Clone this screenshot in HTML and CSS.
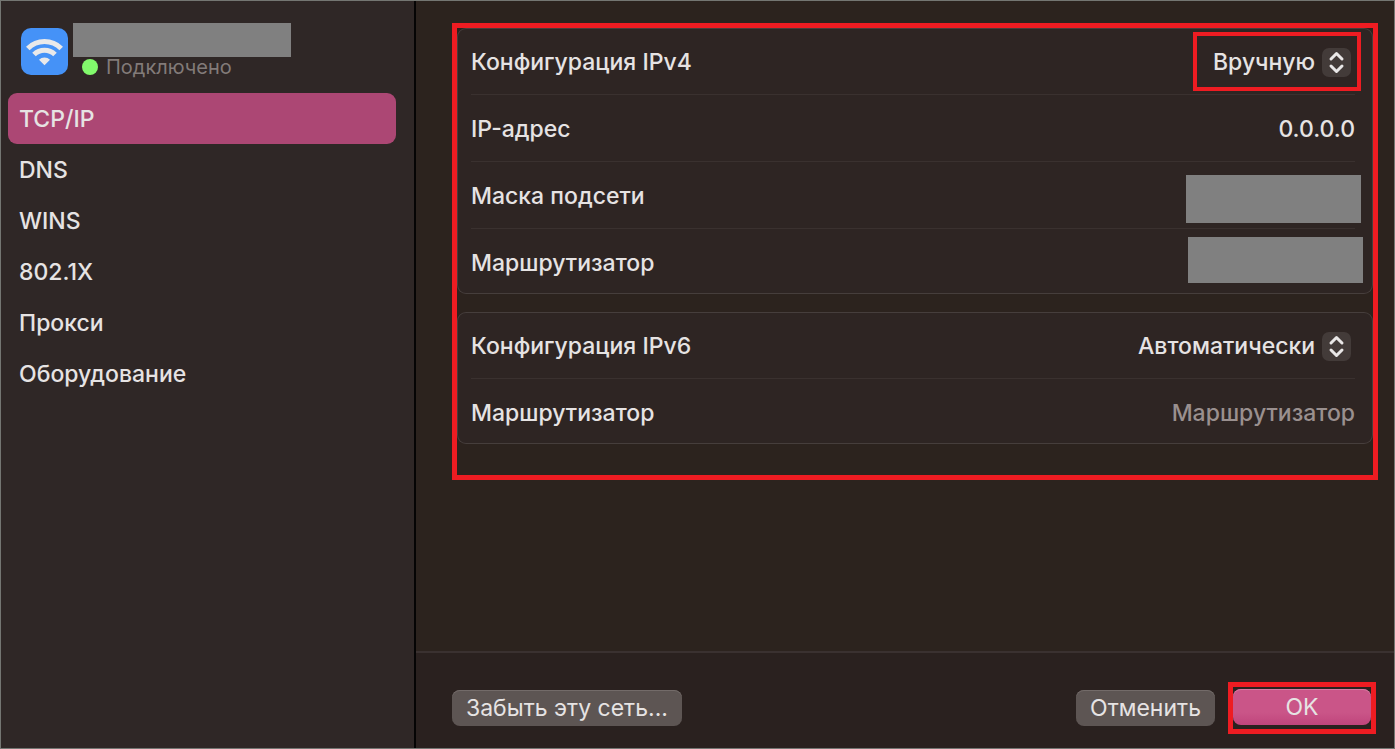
FILE: index.html
```html
<!DOCTYPE html>
<html lang="ru">
<head>
<meta charset="utf-8">
<meta name="viewport" content="width=device-width, initial-scale=1">
<title>TCP/IP</title>
<link rel="stylesheet" href="styles.css">
</head>
<body>
<div class="window">
  <aside class="sidebar">
    <header class="network">
      <svg class="network-icon" viewBox="0 0 47 47" aria-hidden="true">
        <rect width="47" height="47" rx="10" fill="#4592f7"/>
        <g fill="none" stroke="#e9e9ea" stroke-width="5">
          <path d="M6.800 20.400a23.600 23.600 0 0 1 33.400 0"/>
          <path d="M13 26.600a14.800 14.800 0 0 1 21 0"/>
        </g>
        <path d="M23.500 37.200l-5.500-5.500a7.700 7.700 0 0 1 11 0z" fill="#e9e9ea"/>
      </svg>
      <div class="network-text">
        <div class="mask mask-name"></div>
        <p class="status"><span class="dot"></span>Подключено</p>
      </div>
    </header>
    <nav class="menu">
      <a class="menu-item active" href="#tcpip" aria-current="page">TCP/IP</a>
      <a class="menu-item" href="#dns">DNS</a>
      <a class="menu-item" href="#wins">WINS</a>
      <a class="menu-item" href="#8021x">802.1X</a>
      <a class="menu-item" href="#proxy">Прокси</a>
      <a class="menu-item" href="#hardware">Оборудование</a>
    </nav>
  </aside>

  <main class="main">
    <div class="content">
      <div class="marked-area">
        <section class="card">
          <div class="row">
            <label for="ipv4-mode">Конфигурация IPv4</label>
            <span class="picker marked">
              <select id="ipv4-mode"><option>Вручную</option></select>
              <svg class="chevrons" viewBox="0 0 29 29" aria-hidden="true"><path d="M9 11l5.500-5.500 5.500 5.500M9 18l5.500 5.500 5.500-5.500"/></svg>
            </span>
          </div>
          <div class="row">
            <label for="ip">IP-адрес</label>
            <input id="ip" class="value" type="text" value="0.0.0.0">
          </div>
          <div class="row">
            <span>Маска подсети</span>
            <div class="mask mask-subnet"></div>
          </div>
          <div class="row">
            <span>Маршрутизатор</span>
            <div class="mask mask-router"></div>
          </div>
        </section>
        <section class="card">
          <div class="row">
            <label for="ipv6-mode">Конфигурация IPv6</label>
            <span class="picker">
              <select id="ipv6-mode"><option>Автоматически</option></select>
              <svg class="chevrons" viewBox="0 0 29 29" aria-hidden="true"><path d="M9 11l5.500-5.500 5.500 5.500M9 18l5.500 5.500 5.500-5.500"/></svg>
            </span>
          </div>
          <div class="row">
            <label for="router6">Маршрутизатор</label>
            <input id="router6" class="value" type="text" placeholder="Маршрутизатор">
          </div>
        </section>
      </div>
    </div>
    <footer class="footer">
      <button class="btn" type="button">Забыть эту сеть...</button>
      <div class="actions">
        <button class="btn" type="button">Отменить</button>
        <span class="ok-mark"><button class="btn btn-primary" type="button">OK</button></span>
      </div>
    </footer>
  </main>
</div>
</body>
</html>
```

FILE: styles.css
```css
*,
*::before,
*::after {
  box-sizing: border-box;
}

body {
  margin: 0;
  background: #2c231e;
  color: #e6e3e3;
  font-family: Inter, "Liberation Sans", sans-serif;
  font-size: 23px;
  font-weight: 500;
  line-height: 28px;
}

input,
select,
button {
  font: inherit;
  color: inherit;
}

.window {
  display: grid;
  grid-template-columns: 415px 1fr;
  min-height: 100vh;
  border: 1px solid #747672;
}

/* Sidebar */
.sidebar {
  padding: 22px 18px 22px 7px;
  background: #2f2726;
  border-right: 2px solid #050404;
}

.network {
  display: flex;
  gap: 5px;
  padding-left: 13px;
}

.network-icon {
  width: 47px;
  height: 47px;
  margin-top: 5px;
}

.mask {
  flex: none;
  background: #808080;
}

.mask-name {
  width: 218px;
  height: 34px;
}

.status {
  display: flex;
  align-items: center;
  gap: 8px;
  margin: 0;
  padding-left: 9px;
  color: #827b79;
  font-size: 20px;
  font-weight: 400;
  line-height: 20px;
}

.dot {
  width: 16px;
  height: 16px;
  border-radius: 50%;
  background: #82fa6c;
}

.menu {
  display: flex;
  flex-direction: column;
  margin-top: 16px;
}

.menu-item {
  padding: 12px 11px 11px;
  border-radius: 9px;
  color: inherit;
  text-decoration: none;
}

.menu-item.active {
  background: #ac4774;
}

/* Settings pane */
.main {
  display: flex;
  flex-direction: column;
  min-width: 0;
}

.content {
  flex: 1;
  padding: 22px 16px 22px 36px;
}

.marked-area {
  display: flex;
  flex-direction: column;
  gap: 18px;
  padding-bottom: 31px;
  border: 5px solid #ee1c22;
}

.card {
  padding: 0 18px 0 14px;
  border-radius: 9px;
  background: #2e2523;
  box-shadow: inset 0 0 0 1px #463e3c;
}

.row {
  display: flex;
  align-items: center;
  justify-content: space-between;
  gap: 24px;
  height: 67px;
  padding-top: 1px;
  border-bottom: 1px solid #3a312f;
}

.row:last-child {
  height: 65px;
  padding-top: 2px;
  border-bottom: 0;
}

.value {
  flex: 1;
  min-width: 0;
  padding: 0;
  border: 0;
  background: transparent;
  text-align: right;
}

.value::placeholder {
  color: #9a908f;
  opacity: 1;
}

.picker {
  position: relative;
  display: flex;
}

.picker.marked {
  outline: 4px solid #ee1c22;
  outline-offset: 2px;
}

.picker select {
  appearance: none;
  height: 47px;
  padding: 0 39px 0 14px;
  border: 0;
  background: transparent;
}

.picker option {
  color: #111111;
}

.chevrons {
  position: absolute;
  top: 10px;
  right: 4px;
  width: 29px;
  height: 29px;
  border-radius: 7px;
  background: #433b39;
  fill: none;
  stroke: #e9e7e7;
  stroke-width: 3;
  stroke-linecap: round;
  stroke-linejoin: round;
  pointer-events: none;
}

.mask-subnet {
  align-self: flex-end;
  width: 175px;
  height: 48px;
  margin: 0 -6px 5px 0;
}

.mask-router {
  align-self: flex-end;
  width: 175px;
  height: 46px;
  margin: 0 -8px 11px 0;
}

/* Footer */
.footer {
  display: flex;
  align-items: center;
  justify-content: space-between;
  padding: 29px 18px 14px 36px;
  background: #2a211f;
  border-top: 2px solid #3a3130;
}

.actions {
  display: flex;
  align-items: center;
  gap: 13px;
}

.btn {
  height: 36px;
  padding: 0 14px;
  border: 0;
  border-radius: 8px;
  background: #5d5553;
  box-shadow: inset 0 1px 0 #736b69;
  font-weight: 400;
  line-height: 34px;
}

.ok-mark {
  display: flex;
  padding: 2px 0 4px;
  border: 5px solid #ee1c22;
}

.btn-primary {
  width: 138px;
  background: linear-gradient(#ca5588 65%, #c0457c);
  box-shadow: inset 0 1px 0 #d87aa2;
}
```
